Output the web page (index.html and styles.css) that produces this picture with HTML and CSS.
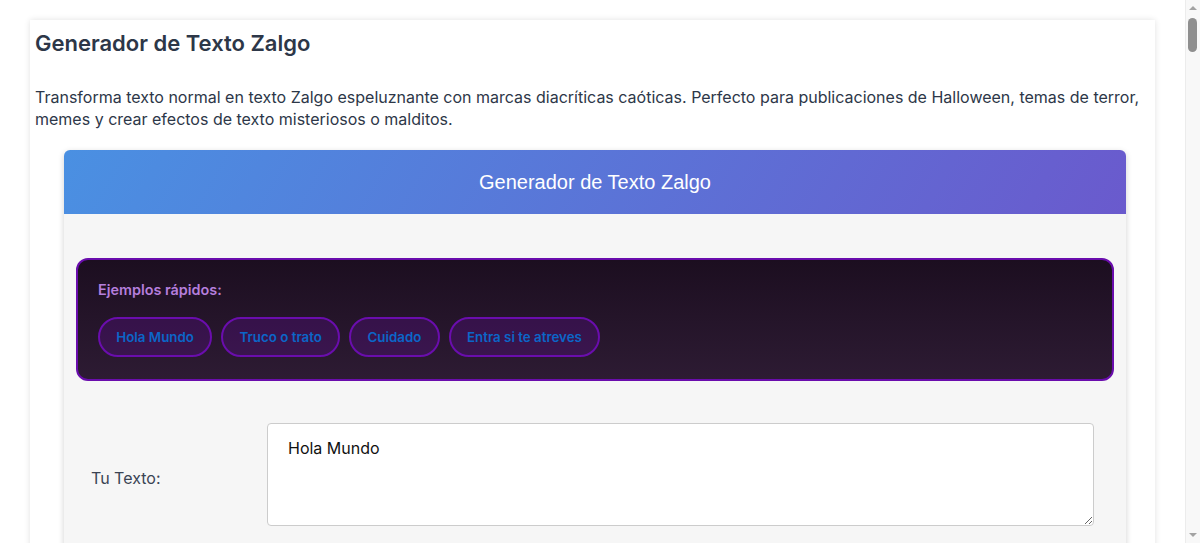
FILE: index.html
```html
<!DOCTYPE html>
<html lang="es">

<head>
    <meta charset="UTF-8">
    <meta name="viewport" content="width=device-width, initial-scale=1.0">
    <title>Generador de Texto Zalgo</title>
    <link rel="stylesheet" href="styles.css">
</head>

<body>
    <div class="page">
        <h2 class="page-title">Generador de Texto Zalgo</h2>
        <p class="intro">Transforma texto normal en texto Zalgo espeluznante con marcas diacríticas caóticas. Perfecto para publicaciones de Halloween, temas de terror, memes y crear efectos de texto misteriosos o malditos.</p>

        <div class="tool">
            <div class="tool-header">Generador de Texto Zalgo</div>
            <div class="tool-body">
                <div class="examples">
                    <div class="examples-title">Ejemplos rápidos:</div>
                    <div class="examples-list">
                        <button class="example-btn">Hola Mundo</button>
                        <button class="example-btn">Truco o trato</button>
                        <button class="example-btn">Cuidado</button>
                        <button class="example-btn">Entra si te atreves</button>
                    </div>
                </div>

                <div class="form-row">
                    <label for="inputText">Tu Texto:</label>
                    <textarea id="inputText">Hola Mundo</textarea>
                </div>
            </div>
        </div>
    </div>

    <!-- scrollbar look-alike, the window scrollbar is not drawn in the capture -->
    <div class="scrollbar">
        <span class="arrow-up"></span>
        <span class="thumb"></span>
        <span class="arrow-down"></span>
    </div>
</body>

</html>
```

FILE: styles.css
```css
/* Zalgo page */
body {
    font-family: Inter, "Noto Sans", sans-serif;
    margin: 0;
    padding: 0 15px 0 0;
    background-color: #fff;
    color: #2d3748;
}

.page {
    margin: 20px 30px;
    padding: 0 5px 40px;
    background: #fff;
    box-shadow: 0 0 6px rgba(0, 0, 0, 0.12);
}

.page-title {
    font-size: 22px;
    font-weight: 600;
    margin: 0;
    padding-top: 10px;
    line-height: 26px;
}

.intro {
    font-size: 16px;
    line-height: 22px;
    margin: 30px 0 20px;
    color: #2d3748;
}

.tool {
    margin: 0 24px 0 29px;
    border-radius: 6px;
    background: #f6f6f6;
    box-shadow: 0 2px 6px rgba(0, 0, 0, 0.18);
    overflow: hidden;
}

.tool-header {
    background: linear-gradient(120deg, #4a90e2, #6a5acd);
    color: white;
    font-family: "Liberation Sans", Arial, sans-serif;
    font-size: 20px;
    line-height: 24px;
    padding: 20px;
    text-align: center;
}

.tool-body {
    padding: 44px 12px 120px;
}

.examples {
    background: linear-gradient(180deg, #1c0e20, #2d1b33);
    border: 2px solid #6a0dad;
    border-radius: 12px;
    padding: 20px 20px 22px;
}

.examples-title {
    color: #b57edc;
    font-size: 14.4px;
    font-weight: 600;
    line-height: 20px;
    margin-bottom: 17px;
}

.examples-list {
    display: flex;
    gap: 9px;
}

.example-btn {
    background: rgba(106, 13, 173, 0.25);
    border: 2px solid #6a0dad;
    border-radius: 20px;
    color: #0b66c8;
    font-family: Inter, sans-serif;
    font-size: 13.333px;
    font-weight: 600;
    height: 40px;
    padding: 0 16.3px;
    cursor: pointer;
}

.form-row {
    display: flex;
    align-items: center;
    margin-top: 42px;
    padding: 0 20px 0 15px;
}

.form-row label {
    width: 176px;
    padding-top: 7px;
    color: #3a4454;
    font-size: 16px;
}

textarea {
    flex: 1;
    height: 103px;
    box-sizing: border-box;
    border: 1px solid #ccc;
    border-radius: 4px;
    padding: 13px 20px;
    font-family: Inter, sans-serif;
    font-size: 16px;
    line-height: 22px;
    color: #111;
    resize: vertical;
}

.scrollbar {
    position: fixed;
    top: 0;
    right: 0;
    width: 15px;
    height: 100%;
    background: #f8f8f8;
    border-left: 1px solid #ececec;
    box-sizing: border-box;
}

.arrow-up,
.arrow-down {
    position: absolute;
    left: 3px;
    width: 0;
    height: 0;
    border-left: 4px solid transparent;
    border-right: 4px solid transparent;
}

.arrow-up {
    top: 6px;
    border-bottom: 4px solid #a3a3a3;
}

.arrow-down {
    bottom: 6px;
    border-top: 4px solid #a3a3a3;
}

.thumb {
    position: absolute;
    top: 18px;
    left: 2px;
    width: 9px;
    height: 34px;
    border-radius: 5px;
    background: #8f8f8f;
}
```
